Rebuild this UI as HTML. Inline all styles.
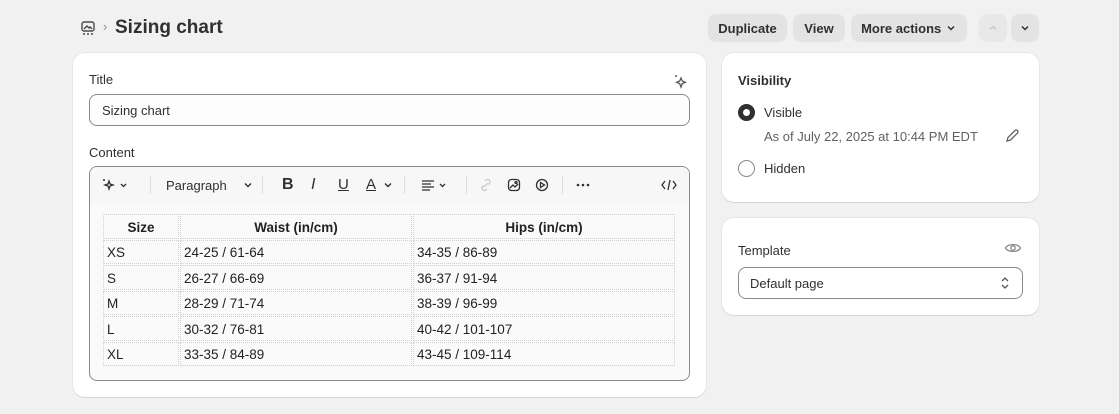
<!DOCTYPE html>
<html><head><style>
*{box-sizing:border-box;margin:0;padding:0}
body{width:1119px;height:414px;background:#f1f1f1;font-family:"Liberation Sans",sans-serif;color:#303030;position:relative;overflow:hidden;font-size:13px}
.abs{position:absolute}
.card{position:absolute;background:#fff;border-radius:12px;box-shadow:0 1px 0 rgba(0,0,0,.07),0 0 0 1px rgba(0,0,0,.04)}
.btn{position:absolute;top:14px;height:28px;background:#e3e3e3;border-radius:8px;font-size:13px;font-weight:bold;color:#303030;display:flex;align-items:center;justify-content:center}
.lbl{position:absolute;font-size:13px}
table{border-collapse:separate;border-spacing:1px;font-family:"Liberation Sans",sans-serif;font-size:13.5px;color:#222}
td,th{border:1px dotted #d0d0d0;height:24.5px;padding:2px 3px 0;text-align:left;font-weight:normal}
th{text-align:center;font-weight:bold}
svg{position:absolute}
</style></head><body>
<svg style="left:80px;top:20px" width="16" height="16" viewBox="0 0 16 16" fill="none" stroke="#4a4a4a" stroke-width="1.4"><rect x="2" y="2" width="12" height="9" rx="2"/><path d="M4 9l3-3 2 2 1-1 2 2"/><path d="M3 14h2M7 14h2M11 14h2"/></svg>
<div class="abs" style="left:103px;top:19px;color:#8a8a8a;font-size:13px">›</div>
<div class="abs" style="left:115px;top:17px;font-size:19px;font-weight:bold;color:#303030">Sizing chart</div>
<div class="btn" style="left:708px;width:79px">Duplicate</div>
<div class="btn" style="left:793px;width:52px">View</div>
<div class="btn" style="left:851px;width:116px">More actions&nbsp;<svg style="position:static" width="12" height="12" viewBox="0 0 12 12"><path d="M3 4.5l3 3 3-3" stroke="#303030" stroke-width="1.5" fill="none"/></svg></div>
<div class="btn" style="left:979px;width:28px;background:#e8e8e8"><svg style="position:static" width="12" height="12" viewBox="0 0 12 12"><path d="M3 7.5l3-3 3 3" stroke="#c8c8c8" stroke-width="1.5" fill="none"/></svg></div>
<div class="btn" style="left:1011px;width:28px"><svg style="position:static" width="12" height="12" viewBox="0 0 12 12"><path d="M3 4.5l3 3 3-3" stroke="#303030" stroke-width="1.5" fill="none"/></svg></div>

<div class="card" style="left:73px;top:53px;width:633px;height:344px"></div>
<div class="lbl" style="left:89px;top:72px">Title</div>
<svg style="left:672px;top:73px" width="16" height="16" viewBox="0 0 16 16" fill="none" stroke="#555" stroke-width="1.3"><path d="M9 5l1.3 3 3 1.3-3 1.3L9 14l-1.3-3.4-3-1.3 3-1.3z"/><circle cx="4" cy="3" r="1" fill="#555" stroke="none"/></svg>
<div class="abs" style="left:89px;top:94px;width:601px;height:32px;border:1px solid #8a8a8a;border-radius:8px;background:#fdfdfd;padding:8px 12px;font-size:13px">Sizing chart</div>
<div class="lbl" style="left:89px;top:145px">Content</div>
<div class="abs" style="left:89px;top:166px;width:601px;height:215px;border:1px solid #8a8a8a;border-radius:8px;background:#fafafa;overflow:hidden">
 <div style="height:36px;background:#f7f7f7;position:relative;font-size:13px;color:#303030">
  <svg style="left:12px;top:11px" width="28" height="14" viewBox="0 0 28 14" fill="none" stroke="#303030" stroke-width="1.3"><path d="M7 3l1 3 3 1-3 1-1 3-1-3-3-1 3-1z"/><circle cx="2" cy="2" r="1" fill="#303030" stroke="none"/><path d="M19 6l2.5 2.5L24 6"/></svg>
  <div style="position:absolute;left:60px;top:9px;width:1px;height:18px;background:#ddd"></div>
  <div style="position:absolute;left:76px;top:11px">Paragraph</div>
  <svg style="left:152px;top:12px" width="12" height="12" viewBox="0 0 12 12"><path d="M3 4.5l3 3 3-3" stroke="#303030" stroke-width="1.4" fill="none"/></svg>
  <div style="position:absolute;left:172px;top:9px;width:1px;height:18px;background:#ddd"></div>
  <div style="position:absolute;left:192px;top:9px;font-weight:bold;font-size:16px">B</div>
  <div style="position:absolute;left:221px;top:9px;font-style:italic;font-size:16px;text-decoration:underline;text-decoration-color:transparent">I</div>
  <div style="position:absolute;left:248px;top:9px;font-size:15px;text-decoration:underline">U</div>
  <div style="position:absolute;left:276px;top:9px;font-size:15px;text-decoration:underline">A</div>
  <svg style="left:292px;top:12px" width="12" height="12" viewBox="0 0 12 12"><path d="M3 4.5l3 3 3-3" stroke="#303030" stroke-width="1.4" fill="none"/></svg>
  <div style="position:absolute;left:314px;top:9px;width:1px;height:18px;background:#ddd"></div>
  <svg style="left:331px;top:11px" width="30" height="14" viewBox="0 0 30 14" fill="none" stroke="#303030" stroke-width="1.3"><path d="M1 3h12M1 6h9M1 9h12M1 12h8"/><path d="M19 6l2.5 2.5L24 6"/></svg>
  <div style="position:absolute;left:376px;top:9px;width:1px;height:18px;background:#ddd"></div>
  <svg style="left:389px;top:11px" width="14" height="14" viewBox="0 0 14 14" fill="none" stroke="#ccc" stroke-width="1.3"><path d="M5 9l4-4M6 3l1-1a2.5 2.5 0 013.5 3.5l-1 1M8 11l-1 1a2.5 2.5 0 01-3.5-3.5l1-1"/></svg>
  <svg style="left:417px;top:11px" width="14" height="14" viewBox="0 0 14 14" fill="none" stroke="#303030" stroke-width="1.3"><rect x="1.5" y="1.5" width="11" height="11" rx="3"/><path d="M3 10l3-3 2 2 3-3"/><circle cx="9" cy="4.5" r="1"/></svg>
  <svg style="left:445px;top:11px" width="14" height="14" viewBox="0 0 14 14" fill="none" stroke="#303030" stroke-width="1.3"><circle cx="7" cy="7" r="5.5"/><path d="M5.5 4.5v5l4-2.5z"/></svg>
  <div style="position:absolute;left:472px;top:9px;width:1px;height:18px;background:#ddd"></div>
  <svg style="left:486px;top:16px" width="14" height="4" viewBox="0 0 14 4" fill="#303030"><circle cx="2" cy="2" r="1.3"/><circle cx="7" cy="2" r="1.3"/><circle cx="12" cy="2" r="1.3"/></svg>
  <svg style="left:571px;top:11px" width="16" height="14" viewBox="0 0 16 14" fill="none" stroke="#303030" stroke-width="1.3"><path d="M4 3L1 7l3 4M12 3l3 4-3 4M9 2L7 12"/></svg>
 </div>
 <div style="position:absolute;left:12px;top:46px">
 <table>
  <tr><th style="width:76px">Size</th><th style="width:232px">Waist (in/cm)</th><th style="width:262px">Hips (in/cm)</th></tr>
  <tr><td>XS</td><td>24-25 / 61-64</td><td>34-35 / 86-89</td></tr>
  <tr><td>S</td><td>26-27 / 66-69</td><td>36-37 / 91-94</td></tr>
  <tr><td>M</td><td>28-29 / 71-74</td><td>38-39 / 96-99</td></tr>
  <tr><td>L</td><td>30-32 / 76-81</td><td>40-42 / 101-107</td></tr>
  <tr><td>XL</td><td>33-35 / 84-89</td><td>43-45 / 109-114</td></tr>
 </table></div>
</div>

<div class="card" style="left:722px;top:53px;width:317px;height:149px"></div>
<div class="lbl" style="left:738px;top:73px;font-weight:bold">Visibility</div>
<div class="abs" style="left:738px;top:104px;width:17px;height:17px;border-radius:50%;border:5px solid #303030"></div>
<div class="lbl" style="left:764px;top:105px">Visible</div>
<div class="lbl" style="left:764px;top:129px;color:#616161">As of July 22, 2025 at 10:44 PM EDT</div>
<svg style="left:1005px;top:128px" width="15" height="15" viewBox="0 0 15 15" fill="none" stroke="#616161" stroke-width="1.3"><path d="M2 13l1-3.5 7-7a1.7 1.7 0 012.5 2.5l-7 7z"/></svg>
<div class="abs" style="left:738px;top:160px;width:17px;height:17px;border-radius:50%;border:1px solid #8a8a8a"></div>
<div class="lbl" style="left:764px;top:161px">Hidden</div>

<div class="card" style="left:722px;top:218px;width:317px;height:97px"></div>
<div class="lbl" style="left:738px;top:243px">Template</div>
<svg style="left:1004px;top:240px" width="18" height="16" viewBox="0 0 18 16" fill="none" stroke="#8a8a8a" stroke-width="1.3"><path d="M1.5 8C4 3.5 14 3.5 16.5 8 14 12.5 4 12.5 1.5 8z"/><circle cx="9" cy="8" r="2.2"/></svg>
<div class="abs" style="left:738px;top:267px;width:285px;height:32px;border:1px solid #8a8a8a;border-radius:8px;padding:8px 11px;font-size:13px">Default page</div>
<svg style="left:998px;top:275px" width="14" height="16" viewBox="0 0 14 16" fill="none" stroke="#555" stroke-width="1.3"><path d="M4 6l3-3 3 3M4 10l3 3 3-3"/></svg>
</body></html>
